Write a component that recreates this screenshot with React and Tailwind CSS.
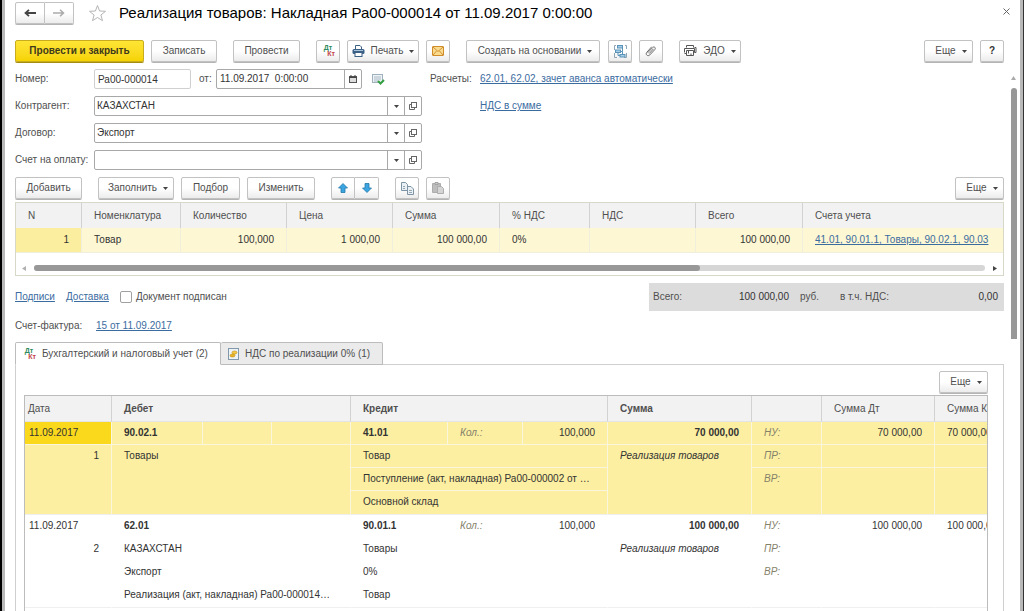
import { useState } from "react";
import { clsx } from "clsx";

const entries = [
    {
        date: "11.09.2017",
        number: "1",
        selected: true,
        debit: "90.02.1",
        debitLines: ["Товары", "", ""],
        credit: "41.01",
        quantity: "100,000",
        creditLines: ["Товар", "Поступление (акт, накладная) Ра00-000002 от …", "Основной склад"],
        sum: "70 000,00",
        comment: "Реализация товаров",
        sumDt: "70 000,00",
        sumKt: "70 000,00",
    },
    {
        date: "11.09.2017",
        number: "2",
        selected: false,
        debit: "62.01",
        debitLines: ["КАЗАХСТАН", "Экспорт", "Реализация (акт, накладная) Ра00-000014…"],
        credit: "90.01.1",
        quantity: "100,000",
        creditLines: ["Товары", "0%", "Товар"],
        sum: "100 000,00",
        comment: "Реализация товаров",
        sumDt: "100 000,00",
        sumKt: "100 000,00",
    },
];

const Caret = () => (
    <svg className="w-[5px] h-[3px] shrink-0" viewBox="0 0 5 3" fill="#444">
        <path d="M0 0h5L2.5 3z" />
    </svg>
);

const DtKtIcon = () => (
    <span aria-hidden="true" className="flex flex-col w-[14px] shrink-0 text-[7px] leading-[6px] font-bold">
        <span className="text-[#2c8a5c]">Дт</span>
        <span className="text-[#c2444a] text-right">Кт</span>
    </span>
);

const PrinterIcon = () => (
    <svg className="w-[13px] h-[12px] shrink-0" viewBox="0 0 13 12">
        <path d="M3.5 4.5v-4h4.5l1.5 1.5v2.5" fill="#fff" stroke="#3b6186" />
        <rect x="0.5" y="4" width="12" height="5" rx="1.5" fill="#3b6186" />
        <rect x="3" y="7.5" width="7" height="4" fill="#fff" stroke="#3b6186" />
        <path d="M2 5.5h9" stroke="#a9c3da" />
    </svg>
);

const MailIcon = () => (
    <svg className="w-[12px] h-[10px]" viewBox="0 0 12 10">
        <rect x="0.5" y="0.5" width="11" height="9" rx="0.5" fill="#fbdc8f" stroke="#d08c28" />
        <path d="M1 1l5 4.500L11 1M1 9l3.500-4M11 9L7.500 5" fill="none" stroke="#c9892b" strokeWidth="0.900" />
    </svg>
);

const StructureIcon = () => (
    <svg className="w-[13px] h-[13px]" viewBox="0 0 13 13" fill="none">
        <path d="M0.500 5V0.500H2M11 0.500h1.500V4M0.500 8v4.500H3M10 12.500h2.500V8" stroke="#8fa5b8" />
        <rect x="3.500" y="0.500" width="5" height="2.500" fill="#a5cde8" stroke="#5a93b8" />
        <rect x="1.500" y="5" width="5" height="2.500" fill="#a5cde8" stroke="#5a93b8" />
        <rect x="6" y="9.500" width="5" height="2.500" fill="#a5cde8" stroke="#5a93b8" />
        <path d="M8.500 3v3.500M4 7.500v3h2M6.500 6.500h2v3" stroke="#5a93b8" />
    </svg>
);

const ClipIcon = () => (
    <svg className="w-[12px] h-[12px]" viewBox="0 0 12 12" fill="none" stroke="#6a6a6a" strokeLinecap="round">
        <path d="M3 7.500l4.600-4.900c1.700-1.600 3.600.3 2.200 2L4.800 9.900c-2 2-4.800-.4-3-2.600L6.500 2M4.500 8.200l3.700-4" />
    </svg>
);

const EdoIcon = () => (
    <svg className="w-[13px] h-[12px] shrink-0" viewBox="0 0 13 12" fill="none" stroke="#555">
        <path d="M2.500 2.500v-2h7v2M0.500 7.500v-4h10v4M2.500 5.500h7v5h-7zM10.500 2.500h1.500v5h-1.500M4.500 5.500v3M7 8.500v2M2.500 8.500H0.500" />
    </svg>
);

const OpenIcon = () => (
    <svg className="w-2 h-2" viewBox="0 0 8 8" fill="none" stroke="#666">
        <rect x="2.500" y="0.500" width="5" height="5" />
        <path d="M2.500 2.500h-2v5h5v-2" />
    </svg>
);

const CalendarIcon = () => (
    <svg className="w-2 h-2" viewBox="0 0 8 8">
        <rect x="0.500" y="1.500" width="7" height="6" fill="#ddd" stroke="#555" />
        <path d="M0 2.500h8M2 0v2M6 0v2" stroke="#444" />
    </svg>
);

const PostedIcon = () => (
    <svg className="w-[13px] h-[11px]" viewBox="0 0 13 11">
        <rect x="0.500" y="0.500" width="10" height="8" fill="#eef3f6" stroke="#9fb1bd" />
        <path d="M2 3h7M2 5h7M2 7h4" stroke="#a9bac5" />
        <path d="M6 7l2.500 2.500L12 6" fill="none" stroke="#35a043" strokeWidth="2" />
    </svg>
);

const ArrowIcon = ({ down }) => (
    <svg className={clsx("w-[10px] h-[10px]", down && "rotate-180")} viewBox="0 0 10 10">
        <path d="M5 0.500L9.500 5H7v4.500H3V5H0.500z" fill="#3aa5e0" stroke="#2378ab" strokeWidth="0.800" />
    </svg>
);

const CopyIcon = () => (
    <svg className="w-[13px] h-[13px]" viewBox="0 0 13 13" fill="#eaf0f4" stroke="#7e94a5">
        <path d="M0.500 0.500h4l2 2v6h-6z" />
        <path d="M6.500 4.500h3.500l2.500 2.500v5.500h-6z" />
        <path d="M8 8.500h3M8 10.500h3M2 4.500h2M2 6.500h2" strokeWidth="0.800" />
    </svg>
);

const PasteIcon = () => (
    <svg className="w-[12px] h-[12px]" viewBox="0 0 12 12">
        <path d="M0.500 1.500h8v9h-8z" fill="#bdbdbd" stroke="#adadad" />
        <path d="M3 0.500h3v2H3z" fill="#ccc" stroke="#a3a3a3" />
        <path d="M5.500 4.500h4l2 2v5h-6z" fill="#d4d4d4" stroke="#adadad" />
    </svg>
);

const VatIcon = () => (
    <svg className="w-[11px] h-[12px] shrink-0" viewBox="0 0 11 12">
        <rect x="0.500" y="0.500" width="10" height="11" fill="#eef3f7" stroke="#8299ab" />
        <ellipse cx="4.500" cy="7.500" rx="2.500" ry="1.500" fill="#e9b520" stroke="#c08a10" strokeWidth="0.600" />
        <ellipse cx="6.500" cy="4.500" rx="2.500" ry="1.500" fill="#f5cb3e" stroke="#c08a10" strokeWidth="0.600" />
    </svg>
);

const Button = ({ primary, className, children, ...props }) => (
    <button
        type="button"
        className={clsx(
            "h-[22px] flex items-center justify-center shrink-0 whitespace-nowrap rounded-[2px] border bg-linear-to-b",
            primary
                ? "font-bold text-[#3f3a1c] border-[#c9ac1e] from-[#fee534] to-[#f6d300] shadow-[0_1px_0_#a58d12]"
                : "border-[#c2c2c2] from-white from-50% to-[#ececec] shadow-[0_1px_0_#b4b4b4]",
            className
        )}
        {...props}
    >
        {children}
    </button>
);

const MoreButton = () => (
    <Button className="w-[49px] gap-[6px] pl-[5px]">
        Еще <Caret />
    </Button>
);

const SelectField = ({ id, label, value }) => (
    <div className="flex items-center h-5">
        <label htmlFor={id} className="w-[79px] shrink-0 whitespace-nowrap">{label}</label>
        <div className="w-[328px] h-5 flex rounded-[2px] border border-[#a8a8a8]">
            <input id={id} defaultValue={value} className="min-w-0 flex-1 px-[2px] text-[#333] outline-none" />
            <button type="button" aria-label="Выбрать" className="w-[17px] flex items-center justify-center border-l border-[#a8a8a8]">
                <Caret />
            </button>
            <button type="button" aria-label="Открыть" className="w-[17px] flex items-center justify-center border-l border-[#a8a8a8]">
                <OpenIcon />
            </button>
        </div>
    </div>
);

const linkClass = "text-[#3b6c9f] underline underline-offset-1";

const goodsHead = "h-[25px] pl-3 text-left font-normal border-r border-[#d2d2d2]";
const goodsCell = "h-[25px] px-3 border-r border-b border-[#f0eedc]";

const GoodsTable = () => (
    <div className="border border-[#d8d8c8]">
        <table className="w-full table-fixed border-separate border-spacing-0">
            <colgroup>
                <col className="w-[66px]" />
                <col className="w-[99px]" />
                <col className="w-[106px]" />
                <col className="w-[106px]" />
                <col className="w-[107px]" />
                <col className="w-[90px]" />
                <col className="w-[106px]" />
                <col className="w-[107px]" />
                <col />
            </colgroup>
            <thead className="bg-[#f2f2f2]">
                <tr>
                    <th className={goodsHead}>N</th>
                    <th className={goodsHead}>Номенклатура</th>
                    <th className={goodsHead}>Количество</th>
                    <th className={goodsHead}>Цена</th>
                    <th className={goodsHead}>Сумма</th>
                    <th className={goodsHead}>% НДС</th>
                    <th className={goodsHead}>НДС</th>
                    <th className={goodsHead}>Всего</th>
                    <th className="h-[25px] pl-3 text-left font-normal">Счета учета</th>
                </tr>
            </thead>
            <tbody className="bg-[#fdf7d4] text-[#333]">
                <tr>
                    <td className={clsx(goodsCell, "text-right bg-[#fcee9f]")}>1</td>
                    <td className={goodsCell}>Товар</td>
                    <td className={clsx(goodsCell, "text-right")}>100,000</td>
                    <td className={clsx(goodsCell, "text-right")}>1 000,00</td>
                    <td className={clsx(goodsCell, "text-right")}>100 000,00</td>
                    <td className={goodsCell}>0%</td>
                    <td className={goodsCell}></td>
                    <td className={clsx(goodsCell, "text-right")}>100 000,00</td>
                    <td className="h-[25px] pl-3 border-b border-[#f0eedc] whitespace-nowrap overflow-hidden">
                        <a href="#accounts" className={linkClass}>41.01, 90.01.1, Товары, 90.02.1, 90.03</a>
                    </td>
                </tr>
            </tbody>
        </table>
        <div className="flex items-center gap-2 h-[22px] pt-3 pb-1 px-[6px]">
            <svg className="w-1 h-[5px]" viewBox="0 0 4 5" fill="#b0b0b0"><path d="M4 0v5L0 2.500z" /></svg>
            <div className="flex-1 h-[6px] rounded-full bg-[#d6d6d6]">
                <div className="w-[70%] h-full rounded-full bg-[#989898]"></div>
            </div>
            <svg className="w-1 h-[5px]" viewBox="0 0 4 5" fill="#444"><path d="M0 0v5L4 2.500z" /></svg>
        </div>
    </div>
);

const entryHead = "h-[26px] pl-3 text-left border-r border-b border-[#d2d2d2] border-b-[#e4e4e4] whitespace-nowrap";

const EntryRows = ({ entry }) => {
    const line = entry.selected ? "border-[#faf6dd]" : "border-transparent";
    const cell = clsx("h-[23px] px-3 border-r border-b align-top leading-[22px] whitespace-nowrap overflow-hidden", line);
    const last = clsx(
        "h-6 px-3 border-r border-b align-top leading-[22px] whitespace-nowrap overflow-hidden",
        line,
        "border-b-[#efefef]"
    );
    const muted = "italic text-[#85826a]";
    const [second, third, fourth] = entry.creditLines;

    return (
        <tbody className={clsx("text-[#333]", entry.selected && "bg-[#fcefa1]")}>
            <tr>
                <td className={clsx("h-[23px] pl-1 border-r border-b leading-[22px]", line, entry.selected && "bg-[#fad91c]")}>
                    {entry.date}
                </td>
                <td className={clsx(cell, "font-bold")}>{entry.debit}</td>
                <td className={cell}></td>
                <td className={cell}></td>
                <td className={clsx(cell, "font-bold")}>{entry.credit}</td>
                <td className={clsx(cell, muted)}>Кол.:</td>
                <td className={clsx(cell, "text-right")}>{entry.quantity}</td>
                <td className={clsx(cell, "text-right font-bold")}>{entry.sum}</td>
                <td className={clsx(cell, muted)}>НУ:</td>
                <td className={clsx(cell, "text-right")}>{entry.sumDt}</td>
                <td className={cell}>{entry.sumKt}</td>
            </tr>
            <tr>
                <td rowSpan={3} className={clsx(last, "text-right")}>{entry.number}</td>
                <td colSpan={3} rowSpan={entry.selected ? 3 : 1} className={entry.selected ? last : cell}>
                    {entry.debitLines[0]}
                </td>
                <td colSpan={3} className={cell}>{second}</td>
                <td rowSpan={3} className={clsx(last, "italic")}>{entry.comment}</td>
                <td className={clsx(cell, muted)}>ПР:</td>
                <td className={cell}></td>
                <td className={cell}></td>
            </tr>
            <tr>
                {!entry.selected && <td colSpan={3} className={cell}>{entry.debitLines[1]}</td>}
                <td colSpan={3} className={cell}>{third}</td>
                <td rowSpan={2} className={clsx(last, muted)}>ВР:</td>
                <td rowSpan={2} className={last}></td>
                <td rowSpan={2} className={last}></td>
            </tr>
            <tr>
                {!entry.selected && <td colSpan={3} className={last}>{entry.debitLines[2]}</td>}
                <td colSpan={3} className={last}>{fourth}</td>
            </tr>
        </tbody>
    );
};

const EntriesTable = () => (
    <div className="overflow-hidden border border-[#bcbcbc] pb-8">
        <table className="w-[1023px] min-w-full table-fixed border-separate border-spacing-0">
            <colgroup>
                <col className="w-[87px]" />
                <col className="w-[91px]" />
                <col className="w-[69px]" />
                <col className="w-[79px]" />
                <col className="w-[97px]" />
                <col className="w-[75px]" />
                <col className="w-[85px]" />
                <col className="w-[144px]" />
                <col className="w-[70px]" />
                <col className="w-[113px]" />
                <col className="w-[113px]" />
            </colgroup>
            <thead className="bg-[#f2f2f2]">
                <tr>
                    <th className="h-[26px] pl-[3px] text-left font-normal border-r border-b border-[#d2d2d2] border-b-[#e4e4e4]">Дата</th>
                    <th colSpan={3} className={entryHead}>Дебет</th>
                    <th colSpan={3} className={entryHead}>Кредит</th>
                    <th className={entryHead}>Сумма</th>
                    <th className={entryHead}></th>
                    <th className={clsx(entryHead, "font-normal")}>Сумма Дт</th>
                    <th className={clsx(entryHead, "font-normal")}>Сумма Кт</th>
                </tr>
            </thead>
            {entries.map((entry) => (
                <EntryRows key={entry.number} entry={entry} />
            ))}
        </table>
    </div>
);

const App = () => {
    const [signed, setSigned] = useState(false);
    const [tab, setTab] = useState("accounting");

    return (
        <div className="flex h-screen overflow-hidden border-l-2 border-r border-l-black border-r-[#333] bg-white font-['Liberation_Sans',Arial,sans-serif] text-[10px] leading-4 text-[#4f4f4f]">
            <div className="w-[3px] shrink-0 bg-[#b9b9b9]"></div>

            <main className="flex-1 min-w-0 pl-[10px] pr-[6px]">
                <header className="flex items-center pt-[2px]">
                    <div className="flex">
                        <Button className="w-[30px] rounded-r-none" aria-label="Назад">
                            <svg className="w-3 h-2" viewBox="0 0 12 8" fill="none" stroke="#444" strokeWidth="1.800"><path d="M12 4H2M5 0.800L1.500 4L5 7.200" /></svg>
                        </Button>
                        <Button className="w-[29px] rounded-l-none border-l-0" aria-label="Вперед">
                            <svg className="w-3 h-2" viewBox="0 0 12 8" fill="none" stroke="#aaa" strokeWidth="1.500"><path d="M0 4h10M7 0.800L10.500 4L7 7.200" /></svg>
                        </Button>
                    </div>
                    <button type="button" aria-label="В избранное" className="ml-[14px]">
                        <svg className="w-[19px] h-[19px]" viewBox="0 0 19 19" fill="#fff" stroke="#b5b5b5">
                            <path d="M9.500 1.500l2.100 5.500 5.900.3-4.600 3.700 1.600 5.700-5-3.200-5 3.200 1.600-5.700-4.600-3.700 5.900-.3z" />
                        </svg>
                    </button>
                    <h1 className="ml-3 text-[15px] leading-5 text-black whitespace-nowrap">
                        Реализация товаров: Накладная Ра00-000014 от 11.09.2017 0:00:00
                    </h1>
                    <button type="button" aria-label="Закрыть" className="ml-auto mr-1 pb-1">
                        <svg className="w-[7px] h-[7px]" viewBox="0 0 7 7" stroke="#666"><path d="M0.500 0.500l6 6M6.500 0.500l-6 6" /></svg>
                    </button>
                </header>

                <div className="flex">
                    <div className="flex-1 min-w-0 pb-[5px]">
                        <div className="flex items-center mt-4">
                            <Button primary className="w-[129px]">Провести и закрыть</Button>
                            <Button className="w-[66px] ml-[7px]">Записать</Button>
                            <Button className="w-[67px] ml-4">Провести</Button>
                            <Button className="w-6 ml-4" aria-label="Проводки"><DtKtIcon /></Button>
                            <Button className="w-[72px] ml-[7px] gap-[6px]"><PrinterIcon /> Печать <Caret /></Button>
                            <Button className="w-6 ml-[7px]" aria-label="Отправить"><MailIcon /></Button>
                            <Button className="w-[134px] ml-4 gap-[6px] pl-1">Создать на основании <Caret /></Button>
                            <Button className="w-6 ml-2" aria-label="Структура"><StructureIcon /></Button>
                            <Button className="w-6 ml-[7px]" aria-label="Файлы"><ClipIcon /></Button>
                            <Button className="w-[62px] ml-4 gap-[6px]"><EdoIcon /> ЭДО <Caret /></Button>
                            <div className="flex gap-[7px] ml-auto">
                                <MoreButton />
                                <Button className="w-6 font-bold text-[#333]">?</Button>
                            </div>
                        </div>

                        <div className="flex mt-[7px]">
                            <div className="flex flex-col gap-[7px]">
                                <div className="flex items-center h-5">
                                    <label htmlFor="number" className="w-[79px] shrink-0">Номер:</label>
                                    <input id="number" defaultValue="Ра00-000014" className="w-[97px] h-5 px-[3px] rounded-[2px] border border-[#d0d0d0] text-[#333] outline-none" />
                                    <label htmlFor="date" className="w-[25px] pl-2">от:</label>
                                    <div className="w-[146px] h-5 flex rounded-[2px] border border-[#a8a8a8]">
                                        <input id="date" defaultValue="11.09.2017  0:00:00" className="min-w-0 flex-1 px-[3px] text-[#333] outline-none" />
                                        <button type="button" aria-label="Календарь" className="w-[17px] flex items-center justify-center border-l border-[#a8a8a8]">
                                            <CalendarIcon />
                                        </button>
                                    </div>
                                    <span className="ml-[10px]"><PostedIcon /></span>
                                </div>
                                <SelectField id="contractor" label="Контрагент:" value="КАЗАХСТАН" />
                                <SelectField id="contract" label="Договор:" value="Экспорт" />
                                <SelectField id="invoice" label="Счет на оплату:" value="" />
                            </div>
                            <div className="flex ml-2 pt-[2px] whitespace-nowrap">
                                <span className="w-[50px]">Расчеты:</span>
                                <div className="flex flex-col items-start gap-[11px]">
                                    <a href="#settlements" className={linkClass}>62.01, 62.02, зачет аванса автоматически</a>
                                    <a href="#vat" className={linkClass}>НДС в сумме</a>
                                </div>
                            </div>
                        </div>

                        <div className="flex items-center mt-[7px]">
                            <Button className="w-[67px]">Добавить</Button>
                            <Button className="w-[76px] ml-4 gap-[6px] pl-1">Заполнить <Caret /></Button>
                            <Button className="w-[59px] ml-[7px]">Подбор</Button>
                            <Button className="w-[68px] ml-[7px]">Изменить</Button>
                            <Button className="w-6 ml-4 rounded-r-none" aria-label="Вверх"><ArrowIcon /></Button>
                            <Button className="w-6 rounded-l-none border-l-0" aria-label="Вниз"><ArrowIcon down /></Button>
                            <Button className="w-6 ml-4" aria-label="Копировать"><CopyIcon /></Button>
                            <Button className="w-6 ml-[7px]" aria-label="Вставить" disabled><PasteIcon /></Button>
                            <div className="ml-auto"><MoreButton /></div>
                        </div>

                        <div className="mt-[3px]"><GoodsTable /></div>

                        <div className="flex items-center h-7 mt-[7px]">
                            <a href="#signatures" className={linkClass}>Подписи</a>
                            <a href="#delivery" className={clsx(linkClass, "ml-[11px]")}>Доставка</a>
                            <label className="flex items-center gap-1 ml-[11px]">
                                <input
                                    type="checkbox"
                                    checked={signed}
                                    onChange={(e) => setSigned(e.target.checked)}
                                    className="appearance-none w-3 h-3 rounded-[2px] border border-[#a0a0a0] bg-white checked:bg-[#3b6c9f]"
                                />
                                Документ подписан
                            </label>
                            <div className="flex items-center w-[355px] h-7 ml-auto px-1 bg-[#dcdcdc]">
                                <span>Всего:</span>
                                <span className="ml-auto text-[#333]">100 000,00</span>
                                <span className="w-[30px] ml-[11px]">руб.</span>
                                <span className="w-[60px] ml-[10px]">в т.ч. НДС:</span>
                                <span className="w-[100px] pr-[2px] text-right text-[#333]">0,00</span>
                            </div>
                        </div>

                        <div className="flex items-center mt-[7px]">
                            <span className="w-[81px]">Счет-фактура:</span>
                            <a href="#invoice-facture" className={linkClass}>15 от 11.09.2017</a>
                        </div>
                    </div>

                    {/* vertical scrollbar */}
                    <div className="flex flex-col items-center w-[7px] ml-[6px] mr-[-3px] pt-[52px]">
                        <svg className="w-[5px] h-1 mb-2" viewBox="0 0 5 4" fill="#aaa"><path d="M0 4h5L2.500 0z" /></svg>
                        <div className="w-[6px] flex-1 rounded-t-full bg-[#989898]"></div>
                    </div>
                </div>

                <section className="mr-[10px] mt-[3px]">
                    <div role="tablist" className="flex">
                        <button
                            type="button"
                            role="tab"
                            aria-selected={tab === "accounting"}
                            onClick={() => setTab("accounting")}
                            className={clsx(
                                "relative z-10 mb-[-1px] h-[23px] w-[206px] flex items-center gap-[6px] pl-[6px] whitespace-nowrap rounded-t-[2px] border border-[#bcbcbc]",
                                tab === "accounting" ? "bg-white border-b-white" : "bg-[#ebebeb]"
                            )}
                        >
                            <DtKtIcon /> Бухгалтерский и налоговый учет (2)
                        </button>
                        <button
                            type="button"
                            role="tab"
                            aria-selected={tab === "vat"}
                            onClick={() => setTab("vat")}
                            className={clsx(
                                "relative z-10 mb-[-1px] h-[23px] w-[162px] flex items-center gap-[6px] pl-[7px] whitespace-nowrap rounded-t-[2px] border border-l-0 border-[#bcbcbc]",
                                tab === "vat" ? "bg-white border-b-white" : "bg-[#ebebeb]"
                            )}
                        >
                            <VatIcon /> НДС по реализации 0% (1)
                        </button>
                    </div>
                    <div className="border border-[#cfcfcf] pt-[6px] pl-2 pr-[15px] pb-6">
                        <div className="flex justify-end mb-[2px]"><MoreButton /></div>
                        <EntriesTable />
                    </div>
                </section>
            </main>

            <div className="w-[3px] shrink-0 bg-[#b9b9b9]"></div>
        </div>
    );
};

export default App;
